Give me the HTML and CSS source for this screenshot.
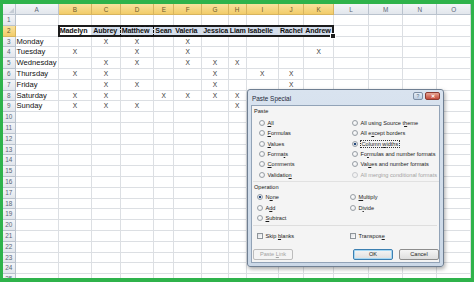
FILE: index.html
```html
<!DOCTYPE html>
<html>
  <head>
    <link rel="stylesheet" href="styles.css">
  </head>
  <body>
    <div class="frame">
      <div class="sheet" id="sheet"></div>

      <div class="dialog">
        <div class="titlebar">
          <span class="title">Paste Special</span>
          <span class="tb-btn help">?</span>
          <span class="tb-btn close">&#x2715;</span>
        </div>
        <div class="dialog-body">
          <div class="group-label">Paste</div>
          <div class="options paste-opts">
            <label class="opt"><i class="radio"></i><span><u>A</u>ll</span></label>
            <label class="opt"><i class="radio"></i><span>All using Source t<u>h</u>eme</span></label>
            <label class="opt"><i class="radio"></i><span><u>F</u>ormulas</span></label>
            <label class="opt"><i class="radio"></i><span>All e<u>x</u>cept borders</span></label>
            <label class="opt"><i class="radio"></i><span><u>V</u>alues</span></label>
            <label class="opt"><i class="radio on"></i><span class="focus">Column <u>w</u>idths</span></label>
            <label class="opt"><i class="radio"></i><span>Forma<u>t</u>s</span></label>
            <label class="opt"><i class="radio"></i><span>Fo<u>r</u>mulas and number formats</span></label>
            <label class="opt"><i class="radio"></i><span><u>C</u>omments</span></label>
            <label class="opt"><i class="radio"></i><span>Val<u>u</u>es and number formats</span></label>
            <label class="opt"><i class="radio"></i><span>Validatio<u>n</u></span></label>
            <label class="opt disabled"><i class="radio"></i><span>All merging conditional formats</span></label>
          </div>

          <div class="group-label op-label">Operation</div>
          <div class="options op-opts">
            <label class="opt"><i class="radio on"></i><span>N<u>o</u>ne</span></label>
            <label class="opt"><i class="radio"></i><span><u>M</u>ultiply</span></label>
            <label class="opt"><i class="radio"></i><span>A<u>d</u>d</span></label>
            <label class="opt"><i class="radio"></i><span>D<u>i</u>vide</span></label>
            <label class="opt"><i class="radio"></i><span><u>S</u>ubtract</span></label>
          </div>

          <div class="options checks">
            <label class="opt"><i class="check"></i><span>Skip <u>b</u>lanks</span></label>
            <label class="opt"><i class="check"></i><span>Transpos<u>e</u></span></label>
          </div>

          <div class="buttons">
            <span class="btn disabled">Paste <u>L</u>ink</span>
            <span class="btn default">OK</span>
            <span class="btn">Cancel</span>
          </div>
        </div>
      </div>
    </div>

    <script>
      const letters = "ABCDEFGHIJKLMNO".split("");
      const names = ["Madelyn", "Aubrey", "Matthew", "Sean", "Valeria", "Jessica", "Liam", "Isabelle", "Rachel", "Andrew"];
      const days = ["Monday", "Tuesday", "Wednesday", "Thursday", "Friday", "Saturday", "Sunday"];
      // which columns have an X, per row
      const marks = { 3: "CDF", 4: "BDFK", 5: "CDFGH", 6: "BCGIJ", 7: "CDGJ", 8: "BCEFGH", 9: "BCDH" };

      const sheet = document.getElementById("sheet");

      for (let r = 0; r <= 25; r++) {
        for (let c = 0; c <= 15; c++) {
          const cell = document.createElement("div");
          cell.className = "cell";
          cell.style.gridArea = `${r + 1} / ${c + 1}`;
          const letter = letters[c - 1];

          if (r === 0 && c === 0) {
            cell.classList.add("corner");
          } else if (r === 0) {
            cell.classList.add("col-head");
            if (c >= 2 && c <= 11) cell.classList.add("hl");
            cell.textContent = letter;
          } else if (c === 0) {
            cell.classList.add("row-head");
            if (r === 2) cell.classList.add("hl");
            cell.textContent = r;
          } else if (r === 2 && c >= 2 && c <= 11) {
            cell.classList.add("name");
            if (c > 2) cell.classList.add("sel");
            cell.textContent = names[c - 2];
          } else if (c === 1 && r >= 3 && r <= 9) {
            cell.textContent = days[r - 3];
          } else if (marks[r] && marks[r].includes(letter)) {
            cell.classList.add("mark");
            cell.textContent = "X";
          }
          sheet.appendChild(cell);
        }
      }

      const selection = document.createElement("div");
      selection.className = "selection";
      sheet.appendChild(selection);

      const marquee = document.createElement("div");
      marquee.className = "marquee";
      sheet.appendChild(marquee);
    </script>
  </body>
</html>
```

FILE: styles.css
```css
html,
body {
  margin: 0;
  padding: 0;
  background: white;
}
.frame {
  position: relative;
  width: 474px;
  height: 282px;
  box-sizing: border-box;
  border: 3px solid #2fb34b;
  border-top-width: 4px;
  border-bottom-width: 4px;
  overflow: hidden;
  font-family: "Liberation Sans", Arial, sans-serif;
}

/* spreadsheet */
.sheet {
  display: grid;
  grid-template-columns:
    12.5px 43.2px 33.6px 28.4px 33.6px 20px 28px 26.4px 18px 32.3px
    25.3px 30px 34.7px 34.3px 34px 1fr;
  grid-template-rows: 11px repeat(25, 10.8px);
}
.cell {
  box-sizing: border-box;
  border-right: 1px solid #dcdfe3;
  border-bottom: 1px solid #dcdfe3;
  padding: 0 1px;
  font-size: 7.6px;
  line-height: 10.5px;
  color: #111;
  white-space: nowrap;
}
.col-head,
.row-head,
.corner {
  background: linear-gradient(#f3f5f8, #e2e6ec);
  border-color: #b9c2cd;
  color: #5a6676;
  font-size: 6.4px;
  text-align: center;
}
.col-head {
  line-height: 11px;
}
.row-head {
  padding: 0;
}
.corner {
  position: relative;
}
.corner::after {
  content: "";
  position: absolute;
  right: 1px;
  bottom: 1px;
  border-left: 5px solid transparent;
  border-bottom: 5px solid #c5ccd5;
}
.hl {
  background: linear-gradient(#f9e29e, #f2cc69);
  border-color: #d7b45e;
  color: #6c5a2c;
}
.name {
  position: relative;
  z-index: 1;
  padding: 0 0 0 1px;
  font-weight: bold;
  font-size: 7.1px;
  letter-spacing: -0.1px;
}
.sel {
  background: #d4deec;
}
.mark {
  text-align: center;
  font-size: 6.6px;
  color: #333;
}
.selection {
  grid-area: 3 / 3 / 4 / 13;
  z-index: 2;
  margin: -1px 0 0 -1px;
  border: 2px solid #1c1c1c;
  position: relative;
}
.selection::after {
  content: "";
  position: absolute;
  right: -4px;
  bottom: -4px;
  width: 4px;
  height: 4px;
  background: #1c1c1c;
  border: 1px solid white;
}
.marquee {
  grid-area: 3 / 5 / 4 / 6;
  z-index: 3;
  margin: 0 0 0 -1px;
  border: 1px dashed #111;
}

/* paste special dialog */
.dialog {
  position: absolute;
  left: 244px;
  top: 85px;
  width: 197px;
  height: 178px;
  box-sizing: border-box;
  display: flex;
  flex-direction: column;
  padding: 0 3px 3px;
  background: linear-gradient(#d9e3ef, #cbd8e7);
  border: 1px solid #6f7f92;
  border-radius: 3px;
  box-shadow: 1px 2px 4px rgba(0, 0, 0, 0.35);
  font-size: 5.6px;
  color: #1b1b1b;
}
.titlebar {
  height: 15px;
  display: flex;
  align-items: flex-start;
  gap: 2px;
}
.title {
  margin: 5px 0 0 1px;
  font-size: 6.4px;
  color: #1e2a3a;
}
.tb-btn {
  margin-top: 2px;
  height: 8px;
  box-sizing: border-box;
  border: 1px solid #7e8fa5;
  border-radius: 2px;
  font-size: 5px;
  line-height: 6px;
  text-align: center;
}
.help {
  margin-left: auto;
  width: 10px;
  background: linear-gradient(#e5edf6, #bccde1);
  color: #5d6f86;
}
.close {
  width: 15px;
  background: linear-gradient(#e8a493, #c34a3a);
  border-color: #8b3a31;
  color: white;
  font-weight: bold;
}
.dialog-body {
  flex: 1;
  display: flex;
  flex-direction: column;
  background: #f4f4f4;
  border: 1px solid #92a3b7;
  padding: 0 0 0 1px;
}
.group-label {
  height: 10px;
  line-height: 10px;
  padding-left: 1px;
}
.op-label {
  margin-top: 1px;
  border-top: 1px solid #e1e1e1;
}
.options {
  display: grid;
  grid-template-columns: 93px 1fr;
  grid-auto-rows: 10.3px;
  padding-left: 6px;
}
.paste-opts {
  margin-top: 2px;
}
.op-opts {
  grid-auto-rows: 10.6px;
  padding-left: 4px;
  padding-bottom: 1px;
  margin-right: 2px;
  border-bottom: 1px solid #dedede;
}
.checks {
  margin-top: 5px;
  grid-auto-rows: 10.6px;
  padding-left: 4px;
}
.opt {
  display: flex;
  align-items: center;
  gap: 2.5px;
  white-space: nowrap;
}
.opt u {
  text-decoration-thickness: 0.5px;
}
.radio {
  width: 6px;
  height: 6px;
  box-sizing: border-box;
  border: 1px solid #9aa0a6;
  border-radius: 50%;
  background: radial-gradient(circle at 40% 40%, #ffffff, #dcdfe3);
}
.radio.on {
  background: radial-gradient(circle, #23477a 0 1.3px, #e9ecf0 1.6px);
}
.check {
  width: 6px;
  height: 6px;
  box-sizing: border-box;
  border: 1px solid #8f959b;
  background: linear-gradient(135deg, #dcdfe3, #ffffff);
}
.focus {
  outline: 1px dotted #333;
  outline-offset: 0;
  padding: 0 1px;
}
.disabled {
  color: #a3a3a3;
}
.disabled .radio {
  border-color: #c8cbce;
  background: #f2f2f2;
}
.buttons {
  display: flex;
  gap: 6px;
  margin-top: 8px;
}
.btn {
  width: 40px;
  height: 11px;
  box-sizing: border-box;
  border: 1px solid #8d8d8d;
  border-radius: 2px;
  background: linear-gradient(#f5f5f5, #dedede);
  text-align: center;
  line-height: 9px;
}
.btn.disabled {
  border-color: #bcbcbc;
  background: #f4f4f4;
}
.btn.default {
  margin-left: auto;
  border-color: #3c7fb1;
  box-shadow: inset 0 0 0 1px #a6d8f4;
}
```
